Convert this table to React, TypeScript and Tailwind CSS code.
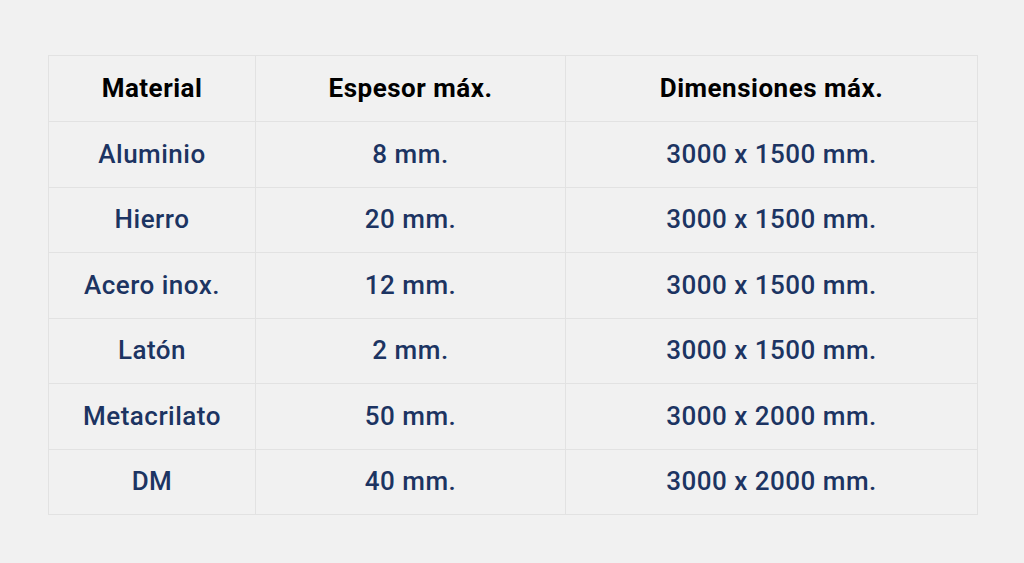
const rows = [
  ["Aluminio", "8 mm.", "3000 x 1500 mm."],
  ["Hierro", "20 mm.", "3000 x 1500 mm."],
  ["Acero inox.", "12 mm.", "3000 x 1500 mm."],
  ["Latón", "2 mm.", "3000 x 1500 mm."],
  ["Metacrilato", "50 mm.", "3000 x 2000 mm."],
  ["DM", "40 mm.", "3000 x 2000 mm."],
];

export default function App() {
  return (
    <div
      className="min-h-[563px] w-full bg-[#f1f1f1] pt-[55px] pl-[48px]"
      style={{ fontFamily: "Roboto, 'Liberation Sans', sans-serif" }}
    >
      <table className="w-[930px] table-fixed border-collapse text-center text-[26px] tracking-[0.5px]">
        <colgroup>
          <col className="w-[207px]" />
          <col className="w-[310px]" />
          <col />
        </colgroup>
        <thead>
          <tr className="h-[66px]">
            <th className="border border-[#e2e2e2] font-bold text-black">Material</th>
            <th className="border border-[#e2e2e2] font-bold text-black">Espesor máx.</th>
            <th className="border border-[#e2e2e2] font-bold text-black">Dimensiones máx.</th>
          </tr>
        </thead>
        <tbody>
          {rows.map((r, i) => (
            <tr key={i} className="h-[65.5px]">
              {r.map((c, j) => (
                <td key={j} className="border border-[#e2e2e2] font-medium text-[#1c3462]">
                  {c}
                </td>
              ))}
            </tr>
          ))}
        </tbody>
      </table>
    </div>
  );
}
